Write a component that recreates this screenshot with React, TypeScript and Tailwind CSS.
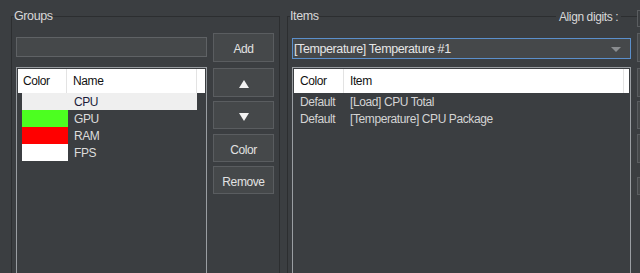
import React from 'react';

const btn =
  'flex w-[61px] items-center justify-center border border-[#5a5d60] bg-[#45484a] pt-[3px] text-[#e2e2e2]';

const TriUp = () => (
  <svg width="10" height="8" viewBox="0 0 10 8">
    <polygon points="5,0 10,8 0,8" fill="#f2f2f2" />
  </svg>
);

const TriDown = () => (
  <svg width="10" height="8" viewBox="0 0 10 8">
    <polygon points="0,0 10,0 5,8" fill="#f2f2f2" />
  </svg>
);

const groups = [
  { name: 'CPU', swatch: 'bg-[#efefef]', selected: true },
  { name: 'GPU', swatch: 'bg-[#4cff20]', selected: false },
  { name: 'RAM', swatch: 'bg-[#ff0000]', selected: false },
  { name: 'FPS', swatch: 'bg-[#ffffff]', selected: false },
];

const items = [
  { color: 'Default', item: '[Load] CPU Total' },
  { color: 'Default', item: '[Temperature] CPU Package' },
];

export default function App() {
  return (
    <div className="flex h-[273px] w-[640px] overflow-hidden bg-[#3b3e41] pl-[11px] pt-[16px] font-['Liberation_Sans',Arial,sans-serif] text-[12px] tracking-[-0.4px] text-[#dcdcdc]">
      {/* Groups */}
      <div className="relative h-[300px] w-[269px] shrink-0 border border-[#2c2e30]">
        <span className="absolute -top-[8px] left-[2px] bg-[#3b3e41] text-[12.5px] leading-[14px] text-[#d8d8d8]">
          Groups
        </span>
        <div className="flex gap-[6px] pl-[4px] pt-[16px]">
          <div className="flex w-[191px] flex-col">
            <div className="mt-[4px] h-[20px] border border-[#5f6265] bg-[#45484a]" />
            <div className="mt-[10px] h-[230px] border border-[#9a9ea2] p-[1px]">
              <div className="flex h-[24px] items-center bg-white text-[#111]">
                <div className="flex h-full w-[49px] items-center border-r border-[#e3e3e3] pl-[5px]">Color</div>
                <div className="flex h-full w-[130px] items-center border-r border-[#e3e3e3] pl-[6px]">Name</div>
              </div>
              {groups.map((g) => (
                <div
                  key={g.name}
                  className={`ml-[4px] flex h-[17px] w-[175px] items-center ${g.selected ? 'bg-[#efefef] text-[#1c1c3a]' : ''}`}
                >
                  <div className={`h-full w-[46px] ${g.swatch}`} />
                  <div className="pl-[6px] pt-[1px]">{g.name}</div>
                </div>
              ))}
            </div>
          </div>
          <div className="flex flex-col">
            <div className={`${btn} h-[29px]`}>Add</div>
            <div className={`${btn} mt-[6px] h-[29px]`}>
              <TriUp />
            </div>
            <div className={`${btn} mt-[4px] h-[28px]`}>
              <TriDown />
            </div>
            <div className={`${btn} mt-[5px] h-[28px]`}>Color</div>
            <div className={`${btn} mt-[4px] h-[28px]`}>Remove</div>
          </div>
        </div>
      </div>

      {/* Items */}
      <div className="relative ml-[7px] h-[300px] w-[420px] shrink-0 border border-[#2c2e30]">
        <span className="absolute -top-[8px] left-[2px] bg-[#3b3e41] text-[12.5px] leading-[14px] text-[#d8d8d8]">
          Items
        </span>
        <span className="absolute -top-[7px] left-[268px] bg-[#3b3e41] px-[3px] leading-[14px] text-[#d8d8d8]">
          Align digits :
        </span>
        <div className="absolute -top-[7px] left-[349px] h-[17px] w-[40px] border border-[#5a5d60] bg-[#3b3e41]" />
        <div className="flex gap-[6px] pl-[4px] pt-[16px]">
          <div className="flex w-[339px] flex-col">
            <div className="mt-[5px] flex h-[21px] items-center border border-[#5b8fcb] bg-[#45484a] pl-[1px] pr-[9px] pt-[1px] text-[12.5px] text-[#e6e6e6]">
              <span className="flex-1">[Temperature] Temperature #1</span>
              <svg width="10" height="5" viewBox="0 0 10 5">
                <polygon points="0,0 10,0 5,5" fill="#8a8d90" />
              </svg>
            </div>
            <div className="mt-[8px] h-[230px] border border-[#9a9ea2] p-[1px]">
              <div className="flex h-[24px] items-center bg-white text-[#111]">
                <div className="flex h-full w-[50px] items-center border-r border-[#e3e3e3] pl-[6px]">Color</div>
                <div className="flex h-full w-[280px] items-center border-r border-[#e3e3e3] pl-[6px]">Item</div>
              </div>
              {items.map((it) => (
                <div key={it.item} className="flex h-[17px] items-center pt-[1px] text-[#d4d4d4]">
                  <div className="w-[50px] pl-[6px]">{it.color}</div>
                  <div className="pl-[6px]">{it.item}</div>
                </div>
              ))}
            </div>
          </div>
          <div className="flex flex-col">
            <div className={`${btn} h-[29px]`} />
            <div className={`${btn} mt-[6px] h-[29px]`} />
            <div className={`${btn} mt-[4px] h-[28px]`} />
            <div className={`${btn} mt-[5px] h-[29px]`} />
            <div className={`${btn} mt-[14px] h-[18px]`} />
          </div>
        </div>
      </div>
    </div>
  );
}
